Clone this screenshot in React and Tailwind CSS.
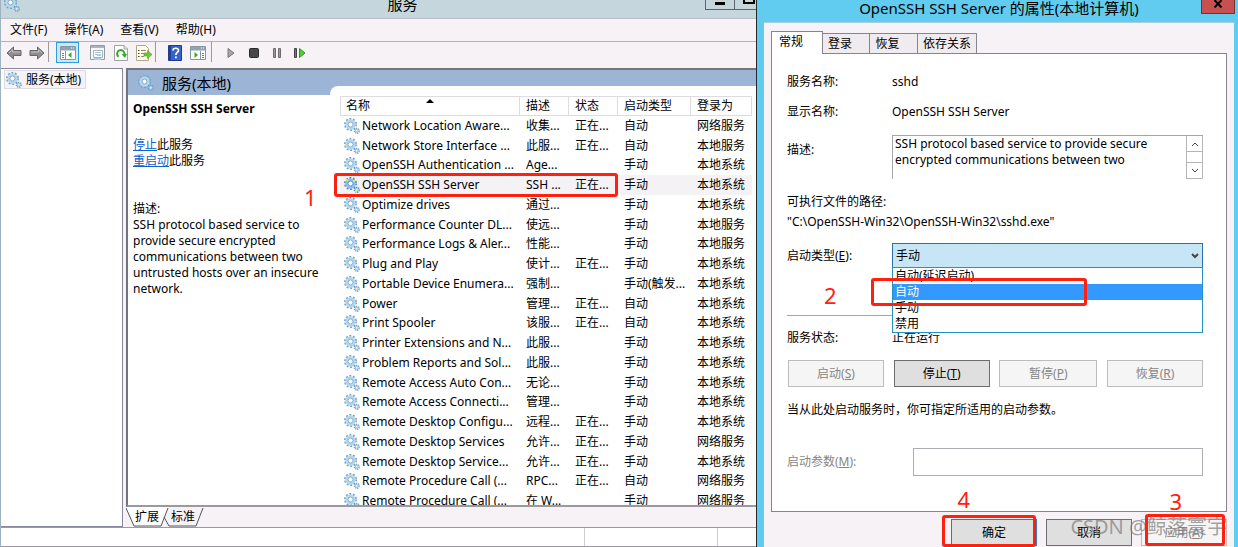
import clsx from "clsx"

const services = [
  { name: "Network Location Aware...", desc: "收集...", status: "正在...", type: "自动", logon: "网络服务" },
  { name: "Network Store Interface ...", desc: "此服...", status: "正在...", type: "自动", logon: "本地服务" },
  { name: "OpenSSH Authentication ...", desc: "Age...", status: "", type: "手动", logon: "本地系统" },
  { name: "OpenSSH SSH Server", desc: "SSH ...", status: "正在...", type: "手动", logon: "本地系统", selected: true },
  { name: "Optimize drives", desc: "通过...", status: "", type: "手动", logon: "本地系统" },
  { name: "Performance Counter DL...", desc: "使远...", status: "", type: "手动", logon: "本地服务" },
  { name: "Performance Logs & Aler...", desc: "性能...", status: "", type: "手动", logon: "本地服务" },
  { name: "Plug and Play", desc: "使计...", status: "正在...", type: "手动", logon: "本地系统" },
  { name: "Portable Device Enumera...", desc: "强制...", status: "", type: "手动(触发...", logon: "本地系统" },
  { name: "Power", desc: "管理...", status: "正在...", type: "自动", logon: "本地系统" },
  { name: "Print Spooler", desc: "该服...", status: "正在...", type: "自动", logon: "本地系统" },
  { name: "Printer Extensions and N...", desc: "此服...", status: "", type: "手动", logon: "本地系统" },
  { name: "Problem Reports and Sol...", desc: "此服...", status: "", type: "手动", logon: "本地系统" },
  { name: "Remote Access Auto Con...", desc: "无论...", status: "", type: "手动", logon: "本地系统" },
  { name: "Remote Access Connecti...", desc: "管理...", status: "", type: "手动", logon: "本地系统" },
  { name: "Remote Desktop Configu...", desc: "远程...", status: "正在...", type: "手动", logon: "本地系统" },
  { name: "Remote Desktop Services", desc: "允许...", status: "正在...", type: "手动", logon: "网络服务" },
  { name: "Remote Desktop Service...", desc: "允许...", status: "正在...", type: "手动", logon: "本地系统" },
  { name: "Remote Procedure Call (...", desc: "RPC...", status: "正在...", type: "自动", logon: "网络服务" },
  { name: "Remote Procedure Call (...", desc: "在 W...", status: "", type: "手动", logon: "网络服务" },
]

const columns = [
  { label: "名称", width: "w-[180px]", sorted: true },
  { label: "描述", width: "w-[49px]" },
  { label: "状态", width: "w-[49px]" },
  { label: "启动类型", width: "w-[73px]" },
  { label: "登录为", width: "" },
]

const menus = ["文件(F)", "操作(A)", "查看(V)", "帮助(H)"]

function GearIcon({ active, className }) {
  return (
    <svg viewBox="0 0 16 16" className={clsx("w-4 h-4 shrink-0", className)} fill="none" aria-hidden="true">
      <circle cx="6.5" cy="6.5" r="5.5" stroke={active ? "#3f88c8" : "#6f9fc4"} strokeWidth="2" strokeDasharray="1.8 1.656" />
      <circle cx="6.5" cy="6.5" r="3.9" stroke={active ? "#8fc0ea" : "#b5d8ef"} strokeWidth="2.6" />
      <circle cx="6.5" cy="6.5" r="2.5" fill="#fff" stroke={active ? "#3d7fbe" : "#6d9cc2"} strokeWidth="0.8" />
      <circle cx="12.8" cy="12.8" r="2.4" stroke={active ? "#3f88c8" : "#6f9fc4"} strokeWidth="1.4" strokeDasharray="1.2 0.7" />
      <circle cx="12.8" cy="12.8" r="1.4" fill="#e6f3fb" stroke="#9cc4e0" strokeWidth="1" />
      {active && <path d="M2 2h2v2H2zM9 3h2v2H9zM11 13h2v2h-2z" fill="#e6e640" />}
    </svg>
  )
}

function ArrowIcon({ flip }) {
  return (
    <svg viewBox="0 0 16 14" className={clsx("w-4 h-[14px]", flip && "-scale-x-100")} aria-hidden="true">
      <path d="M1 7 7.5 1v3.5H15v5H7.500V13z" fill="#8f8f8f" stroke="#666" strokeLinejoin="round" />
      <path d="M3 7l3.500-3.200V6H14" fill="none" stroke="#c4c4c4" />
    </svg>
  )
}

function PaneIcon({ side }) {
  return (
    <svg viewBox="0 0 16 14" className="w-4 h-[14px]" aria-hidden="true">
      <path d="M.5.5h15v13H.5z" fill="#fff" stroke="#8696a2" />
      <path d="M1 1h14v3H1z" fill="#91a3b0" />
      <path d="M11 2h1M13 2h1" stroke="#fff" />
      <path d="M1 4.500h14" stroke="#c6d0d8" />
      {side === "left" ? (
        <>
          <path d="M5.500 5v8" stroke="#8696a2" />
          <path d="M2 7.500h2M2 9.500h2M2 11.500h2" stroke="#4f88c4" />
          <path d="M11.500 6v6L8 9z" fill="#39ad28" />
        </>
      ) : (
        <>
          <path d="M10.500 5v8" stroke="#8696a2" />
          <path d="M12 7.500h2M12 9.500h2M12 11.500h2" stroke="#4f88c4" />
          <path d="M4.500 6v6L8 9z" fill="#39ad28" />
        </>
      )}
    </svg>
  )
}

function PropertiesIcon() {
  return (
    <svg viewBox="0 0 16 16" className="w-4 h-4" aria-hidden="true">
      <path d="M.5.5h14v14H.5z" fill="#f5f7f8" stroke="#8f9aa3" />
      <path d="M1 2h13" stroke="#aab4bc" strokeWidth="2" />
      <path d="M3.500 5.500h9v7h-9z" fill="#fff" stroke="#a7b3bc" />
      <path d="M5 7.500h6M5 9.500h2" stroke="#b5c0c8" />
      <path d="M7 9h4v2H7zM4 13h7v2H4z" fill="#9ad4ee" />
    </svg>
  )
}

function RefreshIcon() {
  return (
    <svg viewBox="0 0 14 16" className="w-[14px] h-4" aria-hidden="true">
      <path d="M.5.5h9.500l3.500 3.500v11.500H.5z" fill="#fff" stroke="#a2a2a2" />
      <path d="M10 .5V4h3.500" fill="none" stroke="#a2a2a2" />
      <path d="M4.500 11.700A3.700 3.700 0 1 1 10.500 9" fill="none" stroke="#37a82b" strokeWidth="2" />
      <path d="M7.500 9h5.500l-2 4z" fill="#37a82b" />
    </svg>
  )
}

function ExportIcon() {
  return (
    <svg viewBox="0 0 16 16" className="w-4 h-4" aria-hidden="true">
      <path d="M.5.5h9l3 3v12H.5z" fill="#fffbe6" stroke="#b1a88c" />
      <path d="M2 5.500h1.500M2 8.500h1.500M2 11.500h1.500" stroke="#444" />
      <path d="M5 5.500h5M5 8.500h3M5 11.500h3" stroke="#8a8a8a" />
      <path d="M8 8h3.500V5.500L16 9.500l-4.500 4V11H8z" fill="#6cc832" stroke="#4aa322" strokeWidth="0.600" />
    </svg>
  )
}

function HelpIcon() {
  return (
    <svg viewBox="0 0 14 16" className="w-[14px] h-4" aria-hidden="true">
      <path d="M.5.5h13v15H.5z" fill="#3764c8" stroke="#1d3c8c" />
      <path d="M1 1h2v14H1z" fill="#1f3f99" />
      <path d="M5 5.500C5 2.500 10.500 2.500 10.500 5.500 10.500 7.500 7.800 7.500 7.800 10" fill="none" stroke="#fff" strokeWidth="1.700" />
      <path d="M7 11.500h1.800v1.800H7z" fill="#fff" />
    </svg>
  )
}

function PlayIcon() {
  return (
    <svg viewBox="0 0 8 12" className="w-2 h-3" aria-hidden="true">
      <path d="M1 1.500 7 6l-6 4.500z" fill="#a6a6a6" stroke="#777" />
    </svg>
  )
}

function StopIcon() {
  return (
    <svg viewBox="0 0 10 10" className="w-[10px] h-[10px]" aria-hidden="true">
      <rect x=".5" y=".5" width="9" height="9" rx="1" fill="#484848" stroke="#2c2c2c" />
    </svg>
  )
}

function PauseIcon() {
  return (
    <svg viewBox="0 0 8 10" className="w-2 h-[10px]" aria-hidden="true">
      <path d="M.5.5h2v9h-2zM5.500.5h2v9h-2z" fill="#999" stroke="#6d6d6d" />
    </svg>
  )
}

function RestartIcon() {
  return (
    <svg viewBox="0 0 12 12" className="w-3 h-3" aria-hidden="true">
      <path d="M.5 1.500h2v9h-2z" fill="#777" stroke="#444" />
      <path d="M5.500 1.500 11 6l-5.500 4.500z" fill="#47d22c" stroke="#2d9a1d" />
    </svg>
  )
}

function ToolButton({ label, active, children }) {
  return (
    <button
      type="button"
      aria-label={label}
      className={clsx(
        "w-[23px] h-[21px] flex items-center justify-center border",
        active ? "border-[#2c9fe0] bg-[#cfe8f8]" : "border-transparent"
      )}
    >
      {children}
    </button>
  )
}

function Separator() {
  return <span className="w-px h-5 bg-[#9c9a9e]" />
}

function Toolbar() {
  return (
    <div className="h-[27px] shrink-0 flex items-start pl-px border-t border-[#b4b2b5] bg-[#f6f2f6]">
      <ToolButton label="后退"><ArrowIcon /></ToolButton>
      <ToolButton label="前进"><ArrowIcon flip /></ToolButton>
      <Separator />
      <div className="flex px-[7px]">
        <ToolButton label="显示/隐藏控制台树" active><PaneIcon side="left" /></ToolButton>
      </div>
      <ToolButton label="属性"><PropertiesIcon /></ToolButton>
      <ToolButton label="刷新"><RefreshIcon /></ToolButton>
      <ToolButton label="导出列表"><ExportIcon /></ToolButton>
      <Separator />
      <div className="flex pl-[7px] pr-[2px]">
        <ToolButton label="帮助"><HelpIcon /></ToolButton>
        <ToolButton label="显示/隐藏操作窗格"><PaneIcon side="right" /></ToolButton>
      </div>
      <Separator />
      <div className="flex px-[7px]">
        <ToolButton label="启动服务"><PlayIcon /></ToolButton>
        <ToolButton label="停止服务"><StopIcon /></ToolButton>
        <ToolButton label="暂停服务"><PauseIcon /></ToolButton>
        <ToolButton label="重启动服务"><RestartIcon /></ToolButton>
      </div>
    </div>
  )
}

function Marker({ className }) {
  return <span className={clsx("absolute z-20 border-3 border-[#ff2010] rounded-[3px] pointer-events-none", className)} />
}

function Step({ className, children }) {
  return <span className={clsx("absolute z-20 text-[22px] leading-6 text-[#ff2010]", className)}>{children}</span>
}

function ServiceTable() {
  return (
    <table className="w-full h-[415px] table-fixed border-separate border-spacing-0 text-left whitespace-nowrap">
      <thead>
        <tr className="h-5">
          {columns.map((col) => (
            <th
              key={col.label}
              className={clsx("relative h-5 p-0 pl-[6px] font-normal leading-4 border-y border-r first:border-l first:pl-[5px] border-[#dedbe2]", col.width)}
            >
              {col.label}
              {col.sorted && (
                <svg viewBox="0 0 8 4" className="absolute top-[2px] left-1/2 w-2 h-1 -translate-x-1" aria-hidden="true">
                  <path d="M4 0l4 4H0z" />
                </svg>
              )}
            </th>
          ))}
        </tr>
      </thead>
      <tbody>
        {services.map((s, i) => (
          <tr key={i} className={clsx("leading-4", s.selected && "bg-[#f5f2f6]")}>
            <td className="relative p-0 pl-1">
              <div className="flex items-center gap-[2px]">
                <GearIcon active={s.selected} />
                {s.name}
              </div>
              {s.selected && (
                <>
                  <Marker className="-left-[6px] -top-[2px] w-[284px] h-6" />
                  <Step className="-left-9 top-[10px]">1</Step>
                </>
              )}
            </td>
            <td className="p-0 pl-[6px]">{s.desc}</td>
            <td className="p-0 pl-[6px]">{s.status}</td>
            <td className="p-0 pl-[6px]">{s.type}</td>
            <td className="p-0 pl-[6px]">{s.logon}</td>
          </tr>
        ))}
      </tbody>
    </table>
  )
}

function ViewTabs() {
  return (
    <div className="h-5 shrink-0 flex relative">
      <svg viewBox="0 0 80 20" className="absolute left-0 top-0 w-20 h-5" aria-hidden="true">
        <path d="M0 0l8 19h27l7-19z" fill="#fff" />
        <path d="M0 1l8 18h27l7-18M38 10l5 9h27l7-18" fill="none" stroke="#555" />
      </svg>
      <button type="button" className="relative pl-[9px] leading-5">扩展</button>
      <button type="button" className="relative pl-3 leading-5">标准</button>
    </div>
  )
}

function ServicesWindow() {
  return (
    <section className="flex-1 min-w-0 flex flex-col border-l border-[#9db4c0] bg-[#f6f2f6]">
      <header className="h-[19px] shrink-0 flex items-start border-b border-[#b5bfc4] bg-[#c5d6dd]">
        <GearIcon className="ml-[3px] -mt-1" />
        <h1 className="flex-1 pl-20 text-center text-[15px] leading-2">服务</h1>
        <button type="button" aria-label="最小化" className="w-[30px] h-[10px] flex justify-center pt-[2px] border border-t-0 border-[#5b6468]">
          <span className="w-[10px] h-[3px] bg-black" />
        </button>
        <button type="button" aria-label="最大化" className="w-[21px] h-[10px] flex justify-end border-b border-[#5b6468]">
          <span className="w-3 h-1 mr-px border-2 border-t-0 border-black" />
        </button>
      </header>

      <nav className="h-[22px] shrink-0 flex items-center gap-[17px] pl-[9px]">
        {menus.map((menu) => (
          <button key={menu} type="button">{menu}</button>
        ))}
      </nav>

      <Toolbar />

      <div className="flex-1 min-h-0 flex gap-[3px]">
        <aside className="w-[122px] shrink-0 border border-l-0 border-[#8688a0] bg-white pt-px pl-[3px]">
          <button type="button" className="h-[19px] flex items-center gap-1 pl-px pr-1 border border-[#dedbe0] bg-[#f6f2f6]">
            <GearIcon />
            服务(本地)
          </button>
        </aside>

        <div className="flex-1 min-w-0 flex flex-col">
          <div className="flex-1 min-h-0 flex overflow-hidden border-l-2 border-t-2 border-b-2 border-[#77757c] border-b-[#9b999e] bg-white">
            <div className="w-[202px] shrink-0">
              <div className="h-[25px] flex items-center gap-2 pl-[10px] bg-[#9cb5d6] text-[15px]">
                <GearIcon />
                服务(本地)
              </div>
              <div className="pl-[5px] pt-[6px] leading-4">
                <h2 className="font-bold">OpenSSH SSH Server</h2>
                <p className="pt-5">
                  <a href="#stop" className="text-[#0a62cc] underline">停止</a>此服务
                </p>
                <p>
                  <a href="#restart" className="text-[#0a62cc] underline">重启动</a>此服务
                </p>
                <p className="pt-8">描述:</p>
                <p>SSH protocol based service to provide secure encrypted communications between two untrusted hosts over an insecure network.</p>
              </div>
            </div>
            <div className="flex-1 min-w-0 pt-4 bg-[#9cb5d6]">
              <div className="h-full rounded-tl-lg bg-white pt-[10px] pl-[10px] pr-1">
                <ServiceTable />
              </div>
            </div>
          </div>
          <ViewTabs />
        </div>
      </div>

      <footer className="h-5 shrink-0 flex justify-end border-y border-[#9b999e] bg-white">
        <span className="w-[133px] border-l border-[#d0ced2]" />
        <span className="w-[39px] border-l border-[#d0ced2]" />
      </footer>
    </section>
  )
}

function FormButton({ className, disabled, children }) {
  return (
    <button
      type="button"
      disabled={disabled}
      className={clsx(
        "h-[27px] border",
        disabled ? "border-[#b9bdbd] bg-[#f6f5f6] text-[#858585]" : "bg-[#dfdfdf]",
        className
      )}
    >
      {children}
    </button>
  )
}

function StartupType() {
  const options = ["自动(延迟启动)", "自动", "手动", "禁用"]
  return (
    <div className="relative flex-1">
      <select
        id="startup-type"
        defaultValue="手动"
        className="block w-full h-[25px] pl-[3px] appearance-none border border-[#2b71a3] bg-[#c6e6f7]"
      >
        {options.map((option) => (
          <option key={option}>{option}</option>
        ))}
      </select>
      <svg viewBox="0 0 8 6" className="absolute right-1 top-[10px] w-2 h-[6px]" fill="none" aria-hidden="true">
        <path d="M1 1l3 3 3-3" stroke="#444" strokeWidth="2" />
      </svg>
      <ul className="absolute z-10 left-0 right-0 top-6 border border-[#2593bf] bg-white leading-4">
        {options.map((option) => (
          <li key={option} className={clsx("pl-[2px]", option === "自动" && "bg-[#3399ff] text-white")}>{option}</li>
        ))}
      </ul>
      <Marker className="-left-[21px] top-[35px] w-[216px] h-7" />
      <Step className="-left-[68px] top-10">2</Step>
    </div>
  )
}

function PropertiesDialog() {
  return (
    <section className="w-[482px] shrink-0 flex flex-col border-l border-[#222a2e] bg-[#62ccf0]">
      <header className="h-[22px] shrink-0 flex items-start">
        <h2 className="flex-1 pl-10 text-center text-[15px] leading-4 whitespace-nowrap">OpenSSH SSH Server 的属性(本地计算机)</h2>
        <button type="button" aria-label="关闭" className="w-[34px] h-[14px] mr-[3px] flex justify-center border border-t-0 border-[#6e3434] bg-[#c75050]">
          <svg viewBox="0 0 10 8" className="w-[10px] h-2" aria-hidden="true">
            <path d="M1.500 0l7 7.500M8.500 0l-7 7.500" stroke="#000" strokeWidth="2" />
          </svg>
        </button>
      </header>

      <div className="flex-1 min-h-0 flex flex-col ml-[7px] mr-1 pt-2 pl-[7px] pr-[7px] border-t border-[#a9cfdf] bg-[#f6f2f6]">
        <div className="h-[23px] shrink-0 flex items-end relative z-10 -mb-px">
          <button type="button" className="w-[52px] h-[23px] pb-[2px] pr-3 border border-b-0 border-[#85858e] bg-white">常规</button>
          <button type="button" className="w-[47px] h-[21px] pr-3 border border-l-0 border-[#85858e] bg-[#efebef]">登录</button>
          <button type="button" className="w-12 h-[21px] pr-3 border border-l-0 border-[#85858e] bg-[#efebef]">恢复</button>
          <button type="button" className="w-[59px] h-[21px] border border-l-0 border-[#85858e] bg-[#efebef]">依存关系</button>
        </div>

        <form className="h-[459px] shrink-0 flex flex-col border border-[#85858e] bg-white pl-[15px] pr-[23px] leading-4">
          <div className="flex pt-5">
            <span className="w-[105px]">服务名称:</span>
            <span>sshd</span>
          </div>
          <div className="flex pt-[14px]">
            <span className="w-[105px]">显示名称:</span>
            <span>OpenSSH SSH Server</span>
          </div>
          <div className="flex pt-[15px]">
            <label htmlFor="service-desc" className="w-[105px] pt-[7px]">描述:</label>
            <div className="flex-1 h-11 flex border-l border-t border-[#a6a6a6]">
              <textarea
                id="service-desc"
                readOnly
                className="flex-1 pl-[2px] resize-none overflow-hidden"
                defaultValue="SSH protocol based service to provide secure encrypted communications between two"
              />
              <div className="w-[17px] flex flex-col justify-between border-x border-b border-[#b5b5b5]">
                <button type="button" aria-label="向上滚动" className="h-4 flex items-center justify-center border-b border-[#b5b5b5]">
                  <svg viewBox="0 0 8 6" className="w-2 h-[6px]" fill="none" aria-hidden="true">
                    <path d="M1 5l3-3 3 3" stroke="#444" />
                  </svg>
                </button>
                <button type="button" aria-label="向下滚动" className="h-4 flex items-center justify-center border-t border-[#b5b5b5]">
                  <svg viewBox="0 0 8 6" className="w-2 h-[6px]" fill="none" aria-hidden="true">
                    <path d="M1 1l3 3 3-3" stroke="#444" />
                  </svg>
                </button>
              </div>
            </div>
          </div>
          <p className="pt-[15px]">可执行文件的路径:</p>
          <p className="pt-1">"C:\OpenSSH-Win32\OpenSSH-Win32\sshd.exe"</p>
          <div className="flex items-center pt-[13px]">
            <label htmlFor="startup-type" className="w-[105px]">启动类型(<u>E</u>):</label>
            <StartupType />
          </div>
          <hr className="mt-[47px] border-[#a6a6a6]" />
          <div className="flex pt-[14px]">
            <span className="w-[105px]">服务状态:</span>
            <span>正在运行</span>
          </div>
          <div className="flex justify-between pt-[14px] pl-px">
            <FormButton disabled className="w-24">启动(<u>S</u>)</FormButton>
            <FormButton className="w-24 border-[#6d6d6d]">停止(<u>T</u>)</FormButton>
            <FormButton disabled className="w-[98px]">暂停(<u>P</u>)</FormButton>
            <FormButton disabled className="w-24">恢复(<u>R</u>)</FormButton>
          </div>
          <p className="pt-[15px]">当从此处启动服务时，你可指定所适用的启动参数。</p>
          <div className="flex items-center pt-[30px]">
            <label htmlFor="start-params" className="w-[126px] text-[#858585]">启动参数(<u>M</u>):</label>
            <input id="start-params" type="text" disabled className="flex-1 min-w-0 h-7 px-1 border border-[#abadb3] bg-white" />
          </div>
        </form>

        <div className="relative flex justify-end gap-[9px] pt-[7px]">
          <FormButton className="w-[86px] border-[#3a7ab0]">确定</FormButton>
          <FormButton className="w-[86px] border-[#6d6d6d]">取消</FormButton>
          <FormButton disabled className="w-[86px]">应用(<u>A</u>)</FormButton>
          <Marker className="right-[191px] top-[3px] w-[94px] h-8" />
          <Marker className="right-[2px] top-[2px] w-20 h-8" />
          <Step className="right-[257px] -top-[25px]">4</Step>
          <Step className="right-[45px] -top-[23px]">3</Step>
          <span className="absolute z-10 right-0 top-[3px] text-xl leading-6 whitespace-nowrap text-[#7d7d7d]/70">CSDN @鲸落寰宇</span>
        </div>
      </div>
    </section>
  )
}

function App() {
  return (
    <main className="h-screen flex overflow-hidden text-xs text-black font-['Noto_Sans','Noto_Sans_CJK_SC',sans-serif]">
      <ServicesWindow />
      <PropertiesDialog />
    </main>
  )
}

export default App
